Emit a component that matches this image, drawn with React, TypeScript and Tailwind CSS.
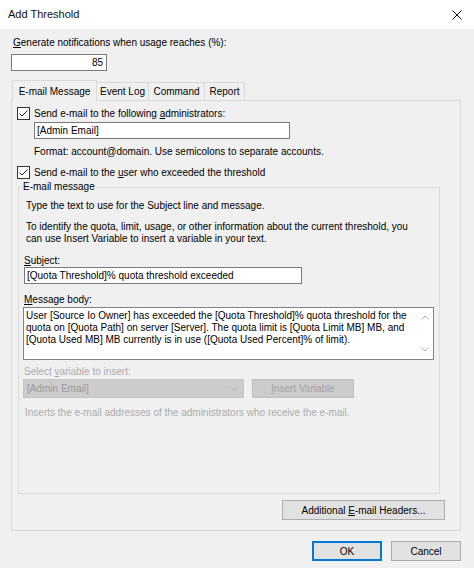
import React from "react";

const Check = () => (
  <span className="w-[13px] h-[13px] border border-[#333333] bg-white flex items-center justify-center shrink-0">
    <svg width="11" height="11" viewBox="0 0 11 11">
      <polyline points="1.5,5.5 4,8 9.5,2.5" fill="none" stroke="#222" strokeWidth="1" />
    </svg>
  </span>
);

const Chevron = ({ up = false, color = "#a0a0a0" }: { up?: boolean; color?: string }) => (
  <svg width="8" height="5" viewBox="0 0 8 5">
    <polyline
      points={up ? "0.5,4.5 4,1 7.5,4.5" : "0.5,0.5 4,4 7.5,0.5"}
      fill="none"
      stroke={color}
      strokeWidth="1"
    />
  </svg>
);

export default function App() {
  return (
    <div className="w-[474px] h-[568px] bg-white flex flex-col font-['Liberation_Sans',Arial,sans-serif] text-[10px] text-black overflow-hidden">
      {/* Title bar */}
      <div className="h-[29px] flex items-center justify-between pl-[8px] pr-[12px] shrink-0">
        <span className="text-[11px] text-[#111]">Add Threshold</span>
        <svg width="10" height="10" viewBox="0 0 10 10">
          <line x1="0.5" y1="0.5" x2="9.5" y2="9.5" stroke="#111" strokeWidth="1" />
          <line x1="9.5" y1="0.5" x2="0.5" y2="9.5" stroke="#111" strokeWidth="1" />
        </svg>
      </div>

      {/* Body */}
      <div className="flex-1 bg-[#f0f0f0] flex flex-col pl-[11px] pr-[13px]">
        <div className="mt-[7px] h-[14px] leading-[14px] pl-[2px]">
          <span className="underline">G</span>enerate notifications when usage reaches (%):
        </div>
        <div className="mt-[4px] w-[96px] h-[17px] border border-[#7a7a7a] bg-white flex items-center justify-end pr-[3px]">
          85
        </div>

        {/* Tabs */}
        <div className="mt-[9px] flex items-start h-[20px] pl-[1px]">
          <div className="relative z-10 w-[85px] h-[21px] border border-b-0 border-[#d9d9d9] bg-[#f0f0f0] flex items-center justify-center">
            E-mail Message
          </div>
          <div className="mt-[2px] w-[52px] h-[18px] border border-l-0 border-b-0 border-[#d9d9d9] bg-[#f0f0f0] flex items-center justify-center">
            Event Log
          </div>
          <div className="mt-[2px] w-[56px] h-[18px] border border-l-0 border-b-0 border-[#d9d9d9] bg-[#f0f0f0] flex items-center justify-center">
            Command
          </div>
          <div className="mt-[2px] w-[40px] h-[18px] border border-l-0 border-b-0 border-[#d9d9d9] bg-[#f0f0f0] flex items-center justify-center">
            Report
          </div>
        </div>

        {/* Panel */}
        <div className="w-[450px] border border-[#d9d9d9] bg-[#f0f0f0] flex flex-col pb-[10px]">
          <div className="mt-[5px] h-[14px] flex items-center gap-[4px] pl-[5px]">
            <Check />
            <span>
              Send e-mail to the following <span className="underline">a</span>dministrators:
            </span>
          </div>
          <div className="mt-[2px] ml-[22px] w-[256px] h-[17px] border border-[#7a7a7a] bg-white flex items-center pl-[2px]">
            [Admin Email]
          </div>
          <div className="mt-[6px] ml-[22px] h-[14px] leading-[14px]">
            Format: account@domain. Use semicolons to separate accounts.
          </div>
          <div className="mt-[6px] h-[14px] flex items-center gap-[4px] pl-[5px]">
            <Check />
            <span>
              Send e-mail to the <span className="underline">u</span>ser who exceeded the threshold
            </span>
          </div>

          <fieldset className="mt-[1px] ml-[6px] w-[422px] border border-[#dcdcdc] pl-[3px] pr-[3px] pb-[74px]">
            <legend className="px-[1px] h-[14px] leading-[14px]">E-mail message</legend>
            <div className="mt-[6px] ml-[4px] h-[12px] leading-[12px]">
              Type the text to use for the Subject line and message.
            </div>
            <div className="mt-[9px] ml-[4px] leading-[12px]">
              To identify the quota, limit, usage, or other information about the current threshold, you
              <br />
              can use Insert Variable to insert a variable in your text.
            </div>
            <div className="mt-[10px] ml-[2px] h-[12px] leading-[12px]">
              <span className="underline">S</span>ubject:
            </div>
            <div className="ml-[2px] w-[278px] h-[17px] border border-[#7a7a7a] bg-white flex items-center pl-[2px]">
              [Quota Threshold]% quota threshold exceeded
            </div>
            <div className="mt-[10px] ml-[2px] h-[12px] leading-[12px]">
              <span className="underline">M</span>essage body:
            </div>
            <div className="mt-[1px] ml-[1px] w-[411px] h-[53px] border border-[#828282] bg-white flex">
              <div className="flex-1 pl-[2px] pt-[2px] leading-[12px]">
                User [Source Io Owner] has exceeded the [Quota Threshold]% quota threshold for the
                <br />
                quota on [Quota Path] on server [Server]. The quota limit is [Quota Limit MB] MB, and
                <br />
                [Quota Used MB] MB currently is in use ([Quota Used Percent]% of limit).
              </div>
              <div className="w-[17px] flex flex-col items-center justify-between pt-[7px] pb-[7px]">
                <Chevron up color="#b0b0b0" />
                <Chevron color="#b0b0b0" />
              </div>
            </div>
            <div className="mt-[6px] ml-[2px] h-[12px] leading-[12px] text-[#acacac]">
              Select <span className="underline">v</span>ariable to insert:
            </div>
            <div className="mt-[1px] ml-[1px] flex gap-[8px]">
              <div className="w-[221px] h-[19px] bg-[#cccccc] border border-[#c4c4c4] flex items-center justify-between pl-[3px] pr-[5px] text-[#9a9a9a]">
                <span>[Admin Email]</span>
                <Chevron color="#b4b4b4" />
              </div>
              <div className="w-[102px] h-[19px] bg-[#cccccc] border border-[#bfbfbf] flex items-center justify-center text-[#a3a3a3]">
                <span>
                  <span className="underline">I</span>nsert Variable
                </span>
              </div>
            </div>
            <div className="mt-[9px] ml-[3px] h-[12px] leading-[12px] text-[#acacac]">
              Inserts the e-mail addresses of the administrators who receive the e-mail.
            </div>
          </fieldset>

          <div className="mt-[6px] flex justify-end pr-[15px]">
            <div className="w-[163px] h-[20px] bg-[#e1e1e1] border border-[#adadad] flex items-center justify-center">
              <span>
                Additional <span className="underline">E</span>-mail Headers...
              </span>
            </div>
          </div>
        </div>

        {/* Bottom buttons */}
        <div className="mt-[10px] flex justify-end gap-[9px]">
          <div className="w-[70px] h-[20px] bg-[#e1e1e1] border-2 border-[#0078d7] flex items-center justify-center">
            OK
          </div>
          <div className="w-[70px] h-[20px] bg-[#e1e1e1] border border-[#adadad] flex items-center justify-center">
            Cancel
          </div>
        </div>
      </div>
    </div>
  );
}
